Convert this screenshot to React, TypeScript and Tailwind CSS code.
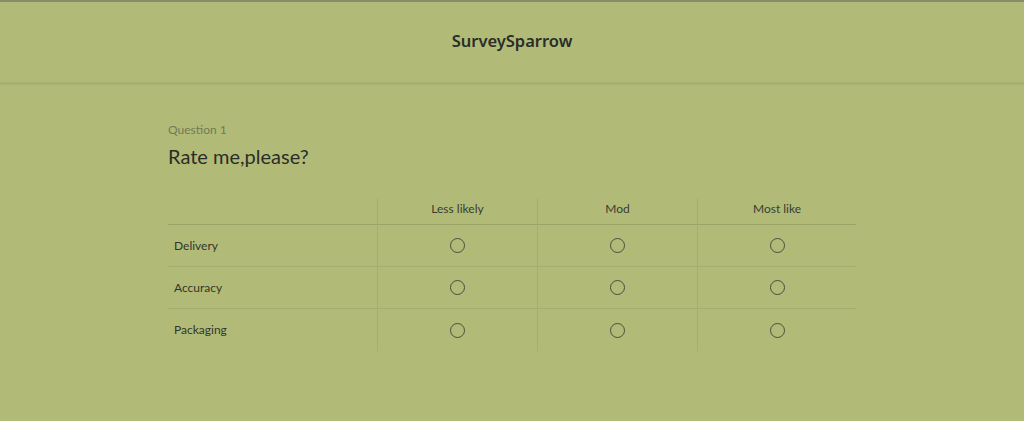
import React from "react";

const rows = ["Delivery", "Accuracy", "Packaging"];
const cols = ["Less likely", "Mod", "Most like"];

function Radio() {
  return <span className="inline-block w-[15px] h-[15px] rounded-full border border-[#4a4c40]" />;
}

export default function App() {
  return (
    <div className="min-h-[421px] bg-[#b1bb77] border-t-2 border-[#878c6c] font-['Lato',sans-serif]">
      <header className="h-[82px] flex items-center justify-center border-b-2 border-[#a7b16f] shadow-[0_1px_1px_rgba(0,0,0,0.04)]">
        <h1 className="font-['Noto_Sans',sans-serif] font-semibold text-[16.5px] text-[#2b2d28] pb-[1px]">SurveySparrow</h1>
      </header>
      <main className="w-[688px] mx-auto pt-[38px]">
        <div className="text-[12px] text-[#727a55] leading-[16px]">Question 1</div>
        <div className="text-[20px] text-[#2b2d28] leading-[26px] mt-[5px]">Rate me,please?</div>
        <div className="mt-[29px] grid grid-cols-[209px_160px_160px_159px]">
          <div className="h-[27px] border-b border-[#9aa466]" />
          {cols.map((c) => (
            <div key={c} className="h-[27px] border-l border-b border-l-[#a4ae6d] border-b-[#9aa466] flex items-center justify-center text-[12px] text-[#3a3c33] pb-[4px]">
              {c}
            </div>
          ))}
          {rows.map((r, i) => (
            <React.Fragment key={r}>
              <div className={`h-[42px] flex items-center pl-[6px] text-[12px] text-[#33352d] ${i < 2 ? "border-b border-[#a4ae6d]" : ""}`}>
                {r}
              </div>
              {cols.map((c) => (
                <div key={c} className={`h-[42px] border-l border-[#a4ae6d] flex items-center justify-center ${i < 2 ? "border-b" : ""}`}>
                  <Radio />
                </div>
              ))}
            </React.Fragment>
          ))}
        </div>
      </main>
    </div>
  );
}
